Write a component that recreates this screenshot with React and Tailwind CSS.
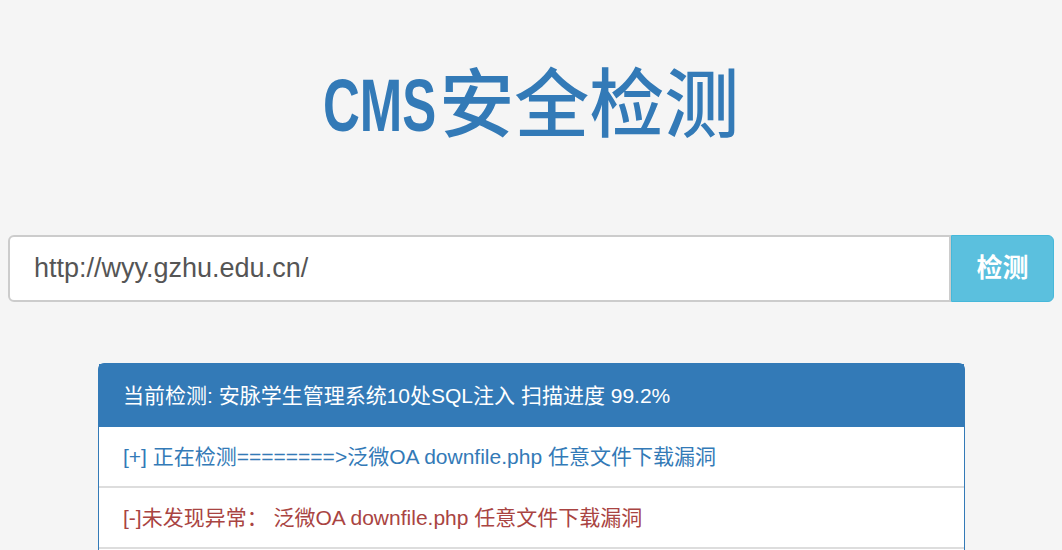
import React from 'react';

const rows = [
  { text: '[+] 正在检测========>泛微OA downfile.php 任意文件下载漏洞', color: 'text-[#337ab7]' },
  { text: '[-]未发现异常： 泛微OA downfile.php 任意文件下载漏洞', color: 'text-[#a94442]' },
  { text: '', color: 'text-[#337ab7]' },
];

export default function App() {
  return (
    <div
      className="min-h-screen bg-[#f5f5f5] overflow-hidden"
      style={{ fontFamily: '"Liberation Sans", Arial, "Noto Sans CJK SC", sans-serif' }}
    >
      {/* Title */}
      <h1
        className="pt-[62px] text-center text-[75px] leading-[86px] font-medium text-[#337ab7]"
        style={{ fontFamily: '"Liberation Sans", "Noto Sans CJK SC", sans-serif' }}
      >
        <span className="inline-block font-bold origin-left scale-x-[0.68] mr-[-54px]">CMS</span>
        <span className="ml-1">安全检测</span>
      </h1>

      {/* Search */}
      <div className="mt-[87px] px-2 flex">
        <input
          type="text"
          defaultValue="http://wyy.gzhu.edu.cn/"
          className="flex-1 h-[67px] px-6 text-[27px] text-[#555] bg-white border-2 border-[#ccc] rounded-l-md outline-none"
        />
        <button className="w-[103px] h-[67px] bg-[#5bc0de] border border-[#46b8da] rounded-r-md text-white text-[26px] font-bold">
          检测
        </button>
      </div>

      {/* Result panel */}
      <div className="mt-[61px] w-[867px] ml-[98px] border border-[#337ab7] rounded-t-md bg-white">
        <div className="h-[63px] px-6 flex items-center bg-[#337ab7] text-white text-[21px]">
          当前检测: 安脉学生管理系统10处SQL注入 扫描进度 99.2%
        </div>
        {rows.map((row, i) => (
          <div
            key={i}
            className={`h-[61px] px-6 flex items-center border-b-2 border-[#ddd] text-[21px] ${row.color}`}
          >
            {row.text}
          </div>
        ))}
      </div>
    </div>
  );
}
